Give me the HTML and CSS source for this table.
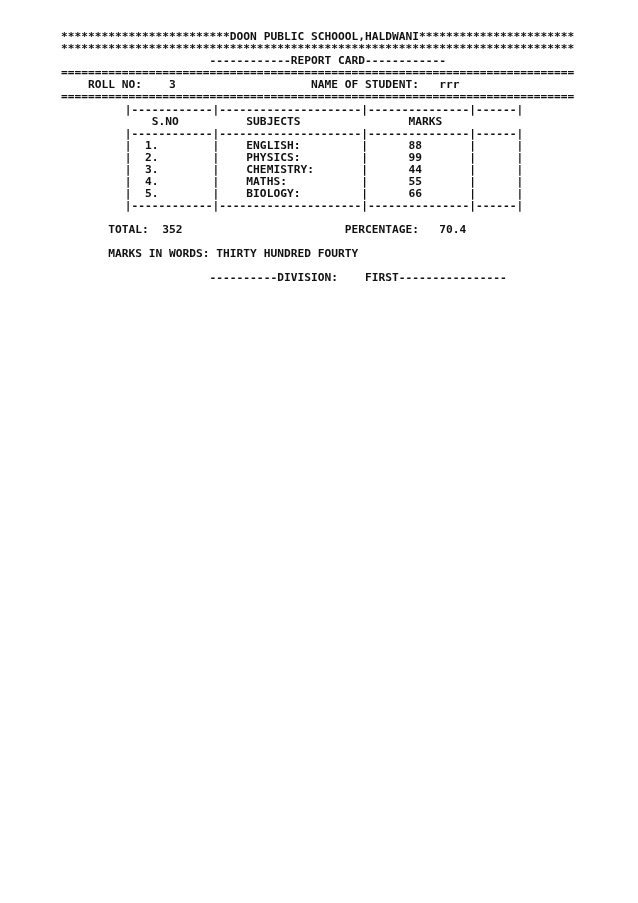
FILE: index.html
```html
<!DOCTYPE html>
<html lang="en">
<head>
<meta charset="utf-8">
<title>Report Card</title>
<link rel="stylesheet" href="styles.css">
</head>
<body>
<main class="sheet">
<pre class="screen head">*************************DOON PUBLIC SCHOOOL,HALDWANI***********************
****************************************************************************
                      ------------REPORT CARD------------
============================================================================
    ROLL NO:    3                    NAME OF STUDENT:   rrr
============================================================================</pre>
<pre class="screen table">         |------------|---------------------|---------------|------|
             S.NO          SUBJECTS                MARKS
         |------------|---------------------|---------------|------|
         |  1.        |    ENGLISH:         |      88       |      |
         |  2.        |    PHYSICS:         |      99       |      |
         |  3.        |    CHEMISTRY:       |      44       |      |
         |  4.        |    MATHS:           |      55       |      |
         |  5.        |    BIOLOGY:         |      66       |      |
         |------------|---------------------|---------------|------|</pre>
<pre class="screen foot">       TOTAL:  352                        PERCENTAGE:   70.4

       MARKS IN WORDS: THIRTY HUNDRED FOURTY

                      ----------DIVISION:    FIRST----------------</pre>
</main>
</body>
</html>
```
FILE: styles.css
```css
html, body {
  margin: 0;
  padding: 0;
  background: #ffffff;
}

.sheet {
  padding: 31px 0 0 61px;
}

.screen {
  margin: 0;
  font-family: "DejaVu Sans Mono", "Liberation Mono", monospace;
  font-weight: bold;
  font-size: 11.23px;
  line-height: 12.05px;
  color: #111111;
  white-space: pre;
  will-change: transform;
}

/* the marks table sits half a column right of the text grid */
.table {
  margin-top: 1px;
  padding-left: 3px;
}

.foot {
  margin-top: 11px;
}
```
